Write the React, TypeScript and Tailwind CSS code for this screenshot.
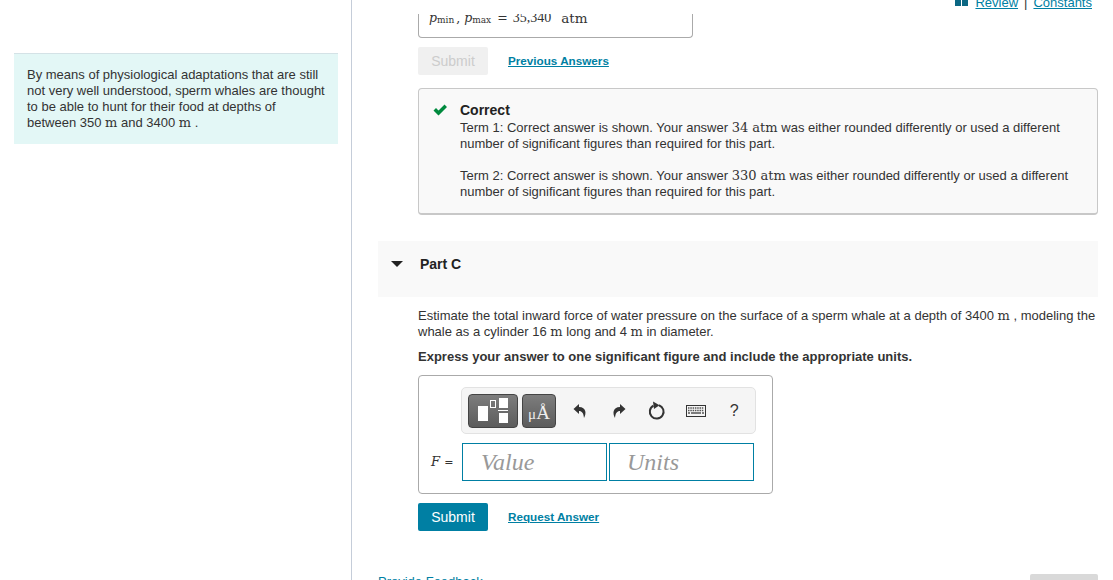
const sans = "font-['Liberation_Sans',Arial,sans-serif]";
const serif = "font-['DejaVu_Serif',serif]";

const Mth = ({ children }: { children: React.ReactNode }) => (
  <span className={`${serif} text-[13px] leading-[0]`}>{children}</span>
);

const TemplateIcon = () => (
  <svg width="30" height="25" viewBox="0 0 30 25" fill="none">
    <rect x="0" y="8" width="10" height="15" fill="#fff" />
    <rect x="12.5" y="2.5" width="5" height="7" stroke="#fff" />
    <rect x="21" y="0" width="9" height="10" fill="#fff" />
    <rect x="20" y="12" width="11" height="1" fill="#fff" />
    <rect x="21" y="15" width="9" height="10" fill="#fff" />
  </svg>
);

const UndoIcon = ({ flip }: { flip?: boolean }) => (
  <svg width="14" height="16" viewBox="0 0 14 16" className={flip ? '-scale-x-100' : ''}>
    <path d="M6 1 L0.5 6 L6 11 V8 C9 8 10.5 10 11 15 C13.5 10.5 13.5 4.2 6 4 Z" fill="#333" />
  </svg>
);

const ResetIcon = () => (
  <svg width="18" height="20" viewBox="0 0 18 20" fill="none">
    <path d="M11 4.2 A6.9 6.9 0 1 1 5.5 4.6" stroke="#333" strokeWidth="2" />
    <path d="M5 0.5 L11.5 4.3 L6 8 Z" fill="#333" />
  </svg>
);

const KeyboardIcon = () => (
  <svg width="20" height="12" viewBox="0 0 20 12" fill="none">
    <rect x="0.5" y="0.5" width="19" height="11" fill="#f5f5f5" stroke="#333" />
    <path d="M2 3h16M2 5.5h16" stroke="#555" strokeWidth="1.4" strokeDasharray="1.5 0.8" />
    <path d="M2 8h2M5 8h10M16 8h2" stroke="#555" strokeWidth="1.4" />
  </svg>
);

const App = () => {
  const tools = [
    { key: 'undo', icon: <UndoIcon /> },
    { key: 'redo', icon: <UndoIcon flip /> },
    { key: 'reset', icon: <ResetIcon /> },
    { key: 'keyboard', icon: <KeyboardIcon /> },
    { key: 'help', icon: <span className="text-[16px] text-[#333]">?</span> }
  ];

  return (
    <div className={`flex w-[1113px] h-[580px] overflow-hidden bg-white text-[13px] leading-4 text-[#333] ${sans}`}>
      <aside className="w-[352px] shrink-0 border-r border-[#c5cdd9] pl-[14px] pr-[13px] pt-[53px]">
        <div className="h-[91px] border-t border-[#d4e2e6] bg-[#e3f7f6] pl-[13px] pr-[10px] pt-[13px]">
          By means of physiological adaptations that are still not very well understood, sperm whales are thought to be able to hunt for their food at depths of between 350 <Mth>m</Mth> and 3400 <Mth>m</Mth> .
        </div>
      </aside>

      <main className="w-[746px] shrink-0 pl-[26px]">
        <div className="h-[14px] overflow-hidden flex justify-end pr-[6px]">
          <div className="-mt-[5px] flex items-start text-[#007fa3] h-4">
            <span className="mt-[1px] mr-[7px] flex gap-[1px]">
              <span className="w-[6px] h-[10px] bg-[#0b6783]" />
              <span className="w-[6px] h-[10px] bg-[#0b6783]" />
            </span>
            <a className="underline">Review</a>
            <span className="mx-[6px] text-[#333]">|</span>
            <a className="underline">Constants</a>
          </div>
        </div>

        <div className={`ml-[40px] w-[275px] h-[24px] border border-t-0 border-[#aaa] rounded-b-[4px] overflow-hidden pl-[10px] ${serif} text-[12.5px] leading-[8px] flex items-start whitespace-pre`}>
          <i>p</i><span className="text-[9px] mt-[2px] mr-[2px]">min</span><span>, </span><i>p</i><span className="text-[9px] mt-[2px] mr-[6px]">max</span><span>=</span>
          <span className="ml-[5px] font-['Liberation_Serif',serif] text-[14px]">35,340</span>
          <span className="ml-[10px] text-[13.5px]">atm</span>
        </div>

        <div className="ml-[40px] mt-[9px] flex items-center gap-5">
          <button className="w-[70px] h-[28px] rounded-[2px] bg-[#f0f0f0] text-[14px] text-[#ccc]">Submit</button>
          <a className="text-[11.7px] font-bold text-[#007fa3] underline">Previous Answers</a>
        </div>

        <section className="ml-[40px] mt-[13px] w-[680px] h-[127px] rounded-[4px] border border-[#c8c8c8] border-b-2 bg-[#f9f9f9] flex pt-[13px]">
          <svg width="14" height="12" viewBox="0 0 14 12" className="ml-[14px] mt-[2px] shrink-0">
            <path d="M0.5 6.5 L3 4 L5.5 6.5 L11.5 0.5 L14 3 L5.5 11.5 Z" fill="#008a3e" />
          </svg>
          <div className="ml-[13px] w-[630px]">
            <h3 className="text-[14px] font-bold text-[#222]">Correct</h3>
            <p className="mt-[2px]">Term 1: Correct answer is shown. Your answer <Mth>34 atm</Mth> was either rounded differently or used a different number of significant figures than required for this part.</p>
            <p className="mt-4">Term 2: Correct answer is shown. Your answer <Mth>330 atm</Mth> was either rounded differently or used a different number of significant figures than required for this part.</p>
          </div>
        </section>

        <section className="mt-[26px] h-[56px] w-[720px] bg-[#f9f9f9] flex pt-[15px]">
          <svg width="12" height="6" viewBox="0 0 12 6" className="ml-[13px] mt-[5px]">
            <path d="M0 0 H12 L6 6 Z" fill="#222" />
          </svg>
          <h2 className="ml-[17px] text-[14px] font-bold text-[#222]">Part C</h2>
        </section>

        <div className="ml-[40px] mt-[11px] w-[690px]">
          <p>Estimate the total inward force of water pressure on the surface of a sperm whale at a depth of 3400 <Mth>m</Mth> , modeling the whale as a cylinder 16 <Mth>m</Mth> long and 4 <Mth>m</Mth> in diameter.</p>
          <p className="mt-[9px] font-bold">Express your answer to one significant figure and include the appropriate units.</p>
        </div>

        <div className="ml-[40px] mt-[10px] w-[355px] h-[119px] rounded-[4px] border border-[#aaa] pt-[11px]">
          <div className="ml-[42px] w-[295px] h-[47px] rounded-[5px] border border-[#e2e2e2] bg-[#f5f5f5] flex items-center pl-[6px]">
            <button className="w-[50px] h-[34px] rounded-[4px] border border-[#444] bg-gradient-to-b from-[#7d7d7d] to-[#5c5c5c] flex items-center justify-center">
              <TemplateIcon />
            </button>
            <button className="ml-[4px] w-[34px] h-[34px] rounded-[4px] border border-[#444] bg-gradient-to-b from-[#7d7d7d] to-[#5c5c5c] font-['Liberation_Serif',serif] text-[19px] leading-[19px] text-[#eee] pt-[6px]">
              <span className="text-[15px]">μ</span>Å
            </button>
            <div className="ml-[5px] flex">
              {tools.map(({ key, icon }) => (
                <span className="w-[38.5px] flex items-center justify-center" key={key}>{icon}</span>
              ))}
            </div>
          </div>
          <div className="mt-[9px] ml-[12px] flex items-center">
            <span className={`w-[31px] ${serif} text-[13px]`}><i>F</i> <span className="text-[11px]">=</span></span>
            <div className="w-[145px] h-[38px] border border-[#007fa3] pl-[18px] font-['Liberation_Serif',serif] italic text-[24px] leading-[36px] text-[#999]">Value</div>
            <div className="ml-[2px] w-[145px] h-[38px] border border-[#007fa3] pl-[17px] font-['Liberation_Serif',serif] italic text-[24px] leading-[36px] text-[#999]">Units</div>
          </div>
        </div>

        <div className="ml-[40px] mt-[9px] flex items-center gap-5">
          <button className="w-[70px] h-[28px] rounded-[2px] bg-[#007fa3] text-[14px] text-white">Submit</button>
          <a className="text-[11.7px] font-bold text-[#007fa3] underline">Request Answer</a>
        </div>

        <div className="mt-[43px] w-[720px] flex justify-between">
          <a className="text-[#007fa3]">Provide Feedback</a>
          <span className="w-[68px] h-[28px] rounded-[2px] bg-[#d9d9d9]" />
        </div>
      </main>
    </div>
  );
};

export default App;
